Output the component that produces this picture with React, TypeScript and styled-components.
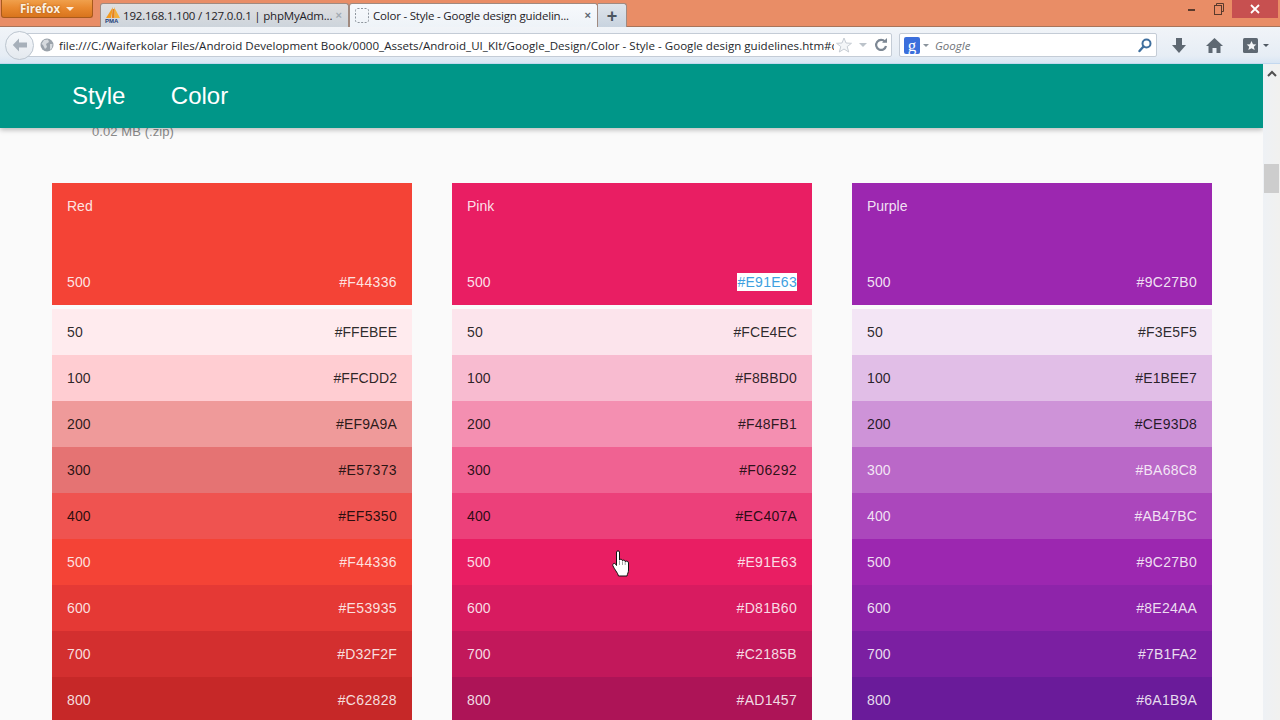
import React from "react";
import styled, { createGlobalStyle } from "styled-components";

const Global = createGlobalStyle`
  html, body { margin: 0; padding: 0; height: 720px; overflow: hidden; background: #fafafa; }
  * { box-sizing: border-box; }
`;

const UI = `"Open Sans", "Noto Sans", sans-serif`;
const WEB = `"Liberation Sans", Arial, sans-serif`;

const Shell = styled.div`
  position: relative;
  width: 1280px;
  height: 720px;
  display: flex;
  flex-direction: column;
  overflow: hidden;
`;

const TitleBar = styled.div`
  height: 27px;
  flex: none;
  display: flex;
  padding-left: 1px;
  background: #e98d66;
  border-bottom: 1px solid #a8745a;
`;

const FirefoxButton = styled.div`
  width: 92px;
  height: 18px;
  margin-right: 7px;
  display: flex;
  align-items: center;
  gap: 6px;
  padding-left: 18px;
  border: 1px solid #a85a1c;
  border-top: none;
  border-radius: 0 0 3px 3px;
  background: linear-gradient(#f0a04c, #e9892f 45%, #d8741d);
  color: #fdf1e2;
  font: 700 11.5px ${UI};
  text-shadow: 0 0 2px #9a5514;
`;

const Caret = styled.span<{ $c?: string; $w?: number }>`
  flex: none;
  width: 0;
  height: 0;
  border-left: ${(p) => p.$w ?? 4}px solid transparent;
  border-right: ${(p) => p.$w ?? 4}px solid transparent;
  border-top: ${(p) => p.$w ?? 4}px solid ${(p) => p.$c ?? "#fdeedd"};
`;

const Tab = styled.div<{ $active?: boolean }>`
  width: 249px;
  height: 24px;
  margin-top: 3px;
  display: flex;
  align-items: center;
  gap: 4px;
  padding: 0 6px 1px 5px;
  border: 1px solid #a08a80;
  border-bottom: none;
  border-radius: 3px 3px 0 0;
  background: ${(p) => (p.$active ? "linear-gradient(#f7f9fc,#eef3f8)" : "linear-gradient(#e0dfe0,#cdd4dc)")};
  color: #1f2226;
  font: 400 11.5px ${UI};
  white-space: nowrap;
`;

const TabTitle = styled.span`
  flex: 1;
  min-width: 0;
  letter-spacing: -0.2px;
`;

const TabClose = styled.span<{ $dim?: boolean }>`
  color: ${(p) => (p.$dim ? "#a3aab3" : "#5e6670")};
  font: 700 11px ${WEB};
`;

const PmaIcon = styled.span`
  position: relative;
  flex: none;
  width: 16px;
  height: 16px;
  margin: 0 -2px 0 -1px;
  display: block;
`;

const PmaLabel = styled.span`
  position: absolute;
  left: 0;
  bottom: -1px;
  color: #23407a;
  font: 700 6px ${WEB};
`;

const NewTab = styled.div`
  width: 29px;
  height: 24px;
  margin-top: 3px;
  display: flex;
  align-items: center;
  justify-content: center;
  border: 1px solid #a08a80;
  border-left: none;
  border-bottom: none;
  border-radius: 0 3px 0 0;
  background: linear-gradient(#dfe4ea, #c8d3df);
  color: #4c5660;
  font: 700 18px ${WEB};
  line-height: 1;
`;

const Spacer = styled.div`
  flex: 1;
`;

const WindowControls = styled.div`
  display: flex;
  height: 18px;
  margin-right: 2px;
`;

const WinButton = styled.div<{ $w: number; $close?: boolean }>`
  width: ${(p) => p.$w}px;
  height: 18px;
  display: flex;
  align-items: center;
  justify-content: center;
  background: ${(p) => (p.$close ? "#c75050" : "transparent")};
`;

const Toolbar = styled.div`
  height: 37px;
  flex: none;
  display: flex;
  align-items: center;
  padding-left: 5px;
  background: linear-gradient(#f1f4f8, #e6edf5 80%, #d9e6f4);
  border-bottom: 1px solid #c3d8ef;
`;

const BackButton = styled.div`
  position: relative;
  z-index: 1;
  flex: none;
  width: 29px;
  height: 29px;
  display: flex;
  align-items: center;
  justify-content: center;
  border-radius: 50%;
  border: 1px solid #bcc5cf;
  background: linear-gradient(#f6f8fb, #e4e9ef);
`;

const UrlBar = styled.div`
  flex: none;
  width: 868px;
  height: 24px;
  margin-left: -10px;
  padding: 0 3px 0 15px;
  display: flex;
  align-items: center;
  border: 1px solid #c4ccd6;
  border-radius: 2px;
  background: #fff;
`;

const UrlText = styled.div`
  flex: none;
  width: 775px;
  margin-left: 5px;
  margin-right: 2px;
  white-space: nowrap;
  overflow: hidden;
  color: #23272c;
  font: 400 11.55px ${UI};
  letter-spacing: 0.015px;
`;

const UrlActions = styled.div`
  display: flex;
  align-items: center;
  gap: 7px;
`;

const SearchBar = styled.div`
  flex: none;
  width: 258px;
  height: 24px;
  margin-left: 7px;
  padding: 0 4px 0 4px;
  display: flex;
  align-items: center;
  gap: 3px;
  border: 1px solid #c4ccd6;
  border-radius: 2px;
  background: #fff;
`;

const GoogleBadge = styled.span`
  width: 16px;
  height: 17px;
  display: flex;
  align-items: center;
  justify-content: center;
  border-radius: 2px;
  background: #3b6fdc;
  color: #fff;
  font: 400 17px "Liberation Serif", serif;
  line-height: 1;
`;

const SearchHint = styled.span`
  flex: 1;
  margin-left: 3px;
  color: #6f7479;
  font: italic 400 11.5px ${UI};
`;

const ToolIcons = styled.div`
  display: flex;
  align-items: center;
  margin-left: 15px;
  gap: 20px;
`;

const BookmarkGroup = styled.div`
  display: flex;
  align-items: center;
  gap: 5px;
`;

const Body = styled.div`
  flex: 1;
  min-height: 0;
  display: flex;
`;

const Page = styled.main`
  flex: 1;
  min-width: 0;
  background: #fafafa;
  overflow: hidden;
`;

const AppHeader = styled.header`
  position: relative;
  z-index: 1;
  height: 64px;
  display: flex;
  align-items: center;
  gap: 45.5px;
  padding-left: 72px;
  background: #009688;
  box-shadow: 0 2px 5px rgba(0, 0, 0, 0.26);
  color: #fff;
  font: 400 24px ${WEB};
`;

const FileNote = styled.div`
  height: 55px;
  padding-left: 92px;
  margin-top: -4px;
  color: #8a8a8a;
  font: 400 13px/15px ${WEB};
  letter-spacing: 0.08px;
`;

const Palettes = styled.div`
  display: grid;
  grid-template-columns: repeat(3, 360px);
  column-gap: 40px;
  padding-left: 52px;
  margin-top: 4px;
  font: 400 14px/18px ${WEB};
`;

const Palette = styled.section`
  display: flex;
  flex-direction: column;
`;

const Hero = styled.div<{ $bg: string }>`
  height: 122px;
  padding: 14px 15px;
  margin-bottom: 4px;
  display: flex;
  flex-direction: column;
  justify-content: space-between;
  background: ${(p) => p.$bg};
  color: rgba(255, 255, 255, 0.87);
`;

const Line = styled.div`
  display: flex;
  justify-content: space-between;
  align-items: center;
`;

const Row = styled(Line)<{ $bg: string; $dark: boolean }>`
  height: 46px;
  flex: none;
  padding: 0 15px;
  background: ${(p) => p.$bg};
  color: ${(p) => (p.$dark ? "rgba(0,0,0,0.84)" : "rgba(255,255,255,0.85)")};
`;

const Shade = styled.span`
  letter-spacing: 0.15px;
`;

const Code = styled.span<{ $track: number }>`
  letter-spacing: ${(p) => p.$track}px;
`;

const Selected = styled(Code)`
  background: #fff;
  color: #3f9fe0;
`;

const Scrollbar = styled.aside`
  position: relative;
  flex: none;
  width: 17px;
  background: linear-gradient(90deg, #eef1f5, #f1f1ef);
`;

const ScrollArrow = styled.svg`
  display: block;
  margin: 6px auto 0;
`;

const ScrollThumb = styled.div`
  position: absolute;
  top: 100px;
  left: 1px;
  width: 15px;
  height: 29px;
  background: #cdcdcd;
`;

const Pointer = styled.svg`
  position: absolute;
  left: 612px;
  top: 550px;
  z-index: 2;
`;

/* The reference's digits are hinted a little wider than its capitals, so a code's
   tracking follows how many digits it holds. */
const track = (hex: string) => ((hex.match(/\d/g)?.length ?? 0) * 0.5) / 7;

type ShadeRow = [string, string, boolean?];
const palettes: { name: string; hero: string; code: string; select?: boolean; rows: ShadeRow[] }[] = [
  {
    name: "Red", hero: "#F44336", code: "#F44336",
    rows: [
      ["50", "#FFEBEE", true], ["100", "#FFCDD2", true], ["200", "#EF9A9A", true],
      ["300", "#E57373", true], ["400", "#EF5350", true], ["500", "#F44336"],
      ["600", "#E53935"], ["700", "#D32F2F"], ["800", "#C62828"],
    ],
  },
  {
    name: "Pink", hero: "#E91E63", code: "#E91E63", select: true,
    rows: [
      ["50", "#FCE4EC", true], ["100", "#F8BBD0", true], ["200", "#F48FB1", true],
      ["300", "#F06292", true], ["400", "#EC407A", true], ["500", "#E91E63"],
      ["600", "#D81B60"], ["700", "#C2185B"], ["800", "#AD1457"],
    ],
  },
  {
    name: "Purple", hero: "#9C27B0", code: "#9C27B0",
    rows: [
      ["50", "#F3E5F5", true], ["100", "#E1BEE7", true], ["200", "#CE93D8", true],
      ["300", "#BA68C8"], ["400", "#AB47BC"], ["500", "#9C27B0"],
      ["600", "#8E24AA"], ["700", "#7B1FA2"], ["800", "#6A1B9A"],
    ],
  },
];

export default function App() {
  return (
    <Shell>
      <Global />
      <TitleBar>
        <FirefoxButton>
          Firefox
          <Caret />
        </FirefoxButton>
        <Tab>
          <PmaIcon>
            <svg width="16" height="12" viewBox="0 0 16 12">
              <path d="M8 0 L6 11 H1 Z" fill="#f29a1f" />
              <path d="M9 0 L15 11 H10 Z" fill="#f4b13a" />
              <path d="M7.6 2 L9.4 2 L9.6 11 H6.8 Z" fill="#e8841a" />
            </svg>
            <PmaLabel>PMA</PmaLabel>
          </PmaIcon>
          <TabTitle>192.168.1.100 / 127.0.0.1 | phpMyAdm...</TabTitle>
          <TabClose $dim>×</TabClose>
        </Tab>
        <Tab $active>
          <svg width="14" height="15" viewBox="0 0 14 15">
            <rect x="0.5" y="0.5" width="13" height="14" rx="2" fill="none" stroke="#8e959d" strokeDasharray="2 1.5" />
          </svg>
          <TabTitle>Color - Style - Google design guidelin...</TabTitle>
          <TabClose>×</TabClose>
        </Tab>
        <NewTab>+</NewTab>
        <Spacer />
        <WindowControls>
          <WinButton $w={26}>
            <svg width="10" height="10" viewBox="0 0 10 10"><rect x="1" y="5" width="7" height="2" fill="#5a3a2c" /></svg>
          </WinButton>
          <WinButton $w={27}>
            <svg width="12" height="12" viewBox="0 0 12 12">
              <path d="M3.5 2.5V0.5H10.5V8.5H8.5" fill="none" stroke="#5a3a2c" />
              <rect x="1.5" y="2.5" width="7" height="9" fill="none" stroke="#5a3a2c" />
            </svg>
          </WinButton>
          <WinButton $w={46} $close>
            <svg width="10" height="10" viewBox="0 0 10 10">
              <path d="M1 1L9 9M9 1L1 9" stroke="#fff" strokeWidth="1.8" />
            </svg>
          </WinButton>
        </WindowControls>
      </TitleBar>

      <Toolbar>
        <BackButton>
          <svg width="16" height="14" viewBox="0 0 16 14">
            <path d="M7 0.5 L0.8 7 L7 13.5 V9.5 H15 V4.5 H7 Z" fill="#a7b0ba" />
          </svg>
        </BackButton>
        <UrlBar>
          <svg width="14" height="14" viewBox="0 0 14 14">
            <circle cx="7" cy="7" r="6.5" fill="#9aa2aa" />
            <path d="M4 2 L8 1.5 L9 4 L6 6 L7 9 L5 11 L3 7 L1.5 6 Z M10 6 L12.5 6 L12 10 L10 12 Z" fill="#d6dade" />
          </svg>
          <UrlText>file:///C:/Waiferkolar Files/Android Development Book/0000_Assets/Android_UI_KIt/Google_Design/Color - Style - Google design guidelines.htm#c</UrlText>
          <UrlActions>
            <svg width="16" height="16" viewBox="0 0 16 16">
              <path d="M8 1 L10 6 L15.5 6.3 L11.2 9.6 L12.7 15 L8 12 L3.3 15 L4.8 9.6 L0.5 6.3 L6 6 Z" fill="#f4f6f8" stroke="#c6ccd3" />
            </svg>
            <Caret $c="#bcc3ca" />
            <svg width="14" height="14" viewBox="0 0 14 14">
              <path d="M11 3.8 A5 5 0 1 0 12 8" fill="none" stroke="#7d8894" strokeWidth="2.2" />
              <path d="M8 4.8 H13 V0 Z" fill="#7d8894" />
            </svg>
          </UrlActions>
        </UrlBar>
        <SearchBar>
          <GoogleBadge>g</GoogleBadge>
          <Caret $c="#8a939c" $w={3} />
          <SearchHint>Google</SearchHint>
          <svg width="14" height="15" viewBox="0 0 14 15">
            <circle cx="8.5" cy="5.5" r="4" fill="none" stroke="#3f6f9e" strokeWidth="2" />
            <path d="M5.5 8.5 L1.5 13" stroke="#3f6f9e" strokeWidth="2.4" strokeLinecap="round" />
          </svg>
        </SearchBar>
        <ToolIcons>
          <svg width="14" height="15" viewBox="0 0 14 15">
            <path d="M4 0 H10 V7 H14 L7 15 L0 7 H4 Z" fill="#5e6872" />
          </svg>
          <svg width="17" height="15" viewBox="0 0 17 15">
            <path d="M8.5 0 L17 8 H14.5 V15 H10.5 V10 H6.5 V15 H2.5 V8 H0 Z" fill="#5e6872" />
          </svg>
          <BookmarkGroup>
            <svg width="15" height="15" viewBox="0 0 15 15">
              <rect width="15" height="15" rx="1.5" fill="#5e6872" />
              <path d="M8.5 3 L10 6.3 L13.3 6.5 L10.8 8.7 L11.7 12 L8.5 10.2 L5.3 12 L6.2 8.7 L3.7 6.5 L7 6.3 Z" fill="#f3f5f7" />
            </svg>
            <Caret $c="#4f5862" $w={3} />
          </BookmarkGroup>
        </ToolIcons>
      </Toolbar>

      <Body>
        <Page>
          <AppHeader>
            <span>Style</span>
            <span>Color</span>
          </AppHeader>
          <FileNote>0.02 MB (.zip)</FileNote>
          <Palettes>
            {palettes.map((p) => (
              <Palette key={p.name}>
                <Hero $bg={p.hero}>
                  <div>{p.name}</div>
                  <Line>
                    <Shade>500</Shade>
                    {p.select ? (
                      <Selected $track={track(p.code)}>{p.code}</Selected>
                    ) : (
                      <Code $track={track(p.code)}>{p.code}</Code>
                    )}
                  </Line>
                </Hero>
                {p.rows.map(([shade, hex, dark]) => (
                  <Row key={shade} $bg={hex} $dark={!!dark}>
                    <Shade>{shade}</Shade>
                    <Code $track={track(hex)}>{hex}</Code>
                  </Row>
                ))}
              </Palette>
            ))}
          </Palettes>
        </Page>
        <Scrollbar>
          <ScrollArrow width="10" height="7" viewBox="0 0 10 7">
            <path d="M1 6 L5 2 L9 6" fill="none" stroke="#505050" strokeWidth="2" />
          </ScrollArrow>
          <ScrollThumb />
        </Scrollbar>
      </Body>

      <Pointer width="18" height="27" viewBox="0 0 18 27">
        <path
          d="M4.5 2 C4.5 0.5 7.5 0.5 7.5 2 V10 C8 8.8 10.5 9 10.5 10.8 C11 9.6 13.2 10 13.2 11.6 C14 10.6 16.5 11 16.5 13 V20 C16.5 22.5 15.5 23.5 15 26 H6.5 C6 23 2 19 0.8 15.5 C0.4 13.5 2.5 12.8 3.6 14 L4.5 15.5 Z"
          fill="#fff"
          stroke="#111"
          strokeWidth="1"
          strokeLinejoin="round"
        />
        <path d="M7.5 11 V15 M10.5 11.5 V15 M13.2 12 V15" stroke="#777" strokeWidth="0.7" fill="none" />
      </Pointer>
    </Shell>
  );
}
